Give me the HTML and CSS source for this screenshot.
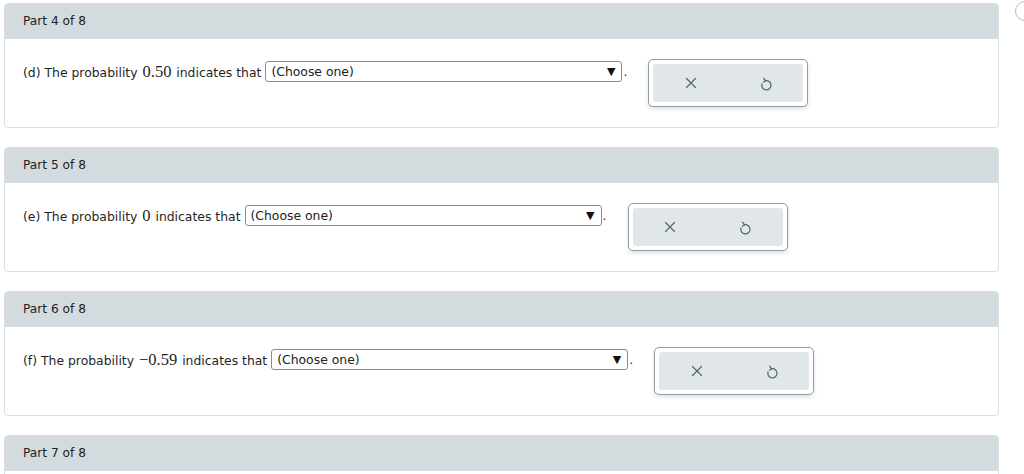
FILE: index.html
```html
<!DOCTYPE html>
<html>
<head>
<meta charset="utf-8">
<link rel="stylesheet" href="styles.css">
</head>
<body>
<div class="page">
  <section class="part">
    <div class="part-head">Part 4 of 8</div>
    <div class="part-body">
      <div class="question">
        <span class="q-text">(d) The probability <span class="math">0.50</span> indicates that</span>
        <div class="dropdown"><span class="dd-label">(Choose one)</span><span class="dd-arrow">▼</span></div><span class="dot">.</span>
      </div>
      <div class="actions">
        <div class="actions-inner">
          <button class="act" aria-label="Clear"><svg width="12" height="12" viewBox="0 0 12 12"><path d="M1.5 1.5 L10.5 10.5 M10.5 1.5 L1.5 10.5" stroke="#4e6978" stroke-width="1.3" fill="none" stroke-linecap="round"/></svg></button>
          <button class="act" aria-label="Undo"><svg width="12" height="15" viewBox="0 0 12 15"><path d="M2 8 A4.6 4.6 0 1 0 5.6 4.8" stroke="#4e6978" stroke-width="1.25" fill="none" stroke-linecap="round"/><path d="M3.6 2.2 L5.6 4.8 L3.4 6.2" stroke="#4e6978" stroke-width="1.25" fill="none" stroke-linecap="round" stroke-linejoin="round"/></svg></button>
        </div>
      </div>
    </div>
  </section>
  <section class="part">
    <div class="part-head">Part 5 of 8</div>
    <div class="part-body">
      <div class="question">
        <span class="q-text">(e) The probability <span class="math">0</span> indicates that</span>
        <div class="dropdown"><span class="dd-label">(Choose one)</span><span class="dd-arrow">▼</span></div><span class="dot">.</span>
      </div>
      <div class="actions">
        <div class="actions-inner">
          <button class="act" aria-label="Clear"><svg width="12" height="12" viewBox="0 0 12 12"><path d="M1.5 1.5 L10.5 10.5 M10.5 1.5 L1.5 10.5" stroke="#4e6978" stroke-width="1.3" fill="none" stroke-linecap="round"/></svg></button>
          <button class="act" aria-label="Undo"><svg width="12" height="15" viewBox="0 0 12 15"><path d="M2 8 A4.6 4.6 0 1 0 5.6 4.8" stroke="#4e6978" stroke-width="1.25" fill="none" stroke-linecap="round"/><path d="M3.6 2.2 L5.6 4.8 L3.4 6.2" stroke="#4e6978" stroke-width="1.25" fill="none" stroke-linecap="round" stroke-linejoin="round"/></svg></button>
        </div>
      </div>
    </div>
  </section>
  <section class="part">
    <div class="part-head">Part 6 of 8</div>
    <div class="part-body">
      <div class="question">
        <span class="q-text">(f) The probability <span class="math">−0.59</span> indicates that</span>
        <div class="dropdown"><span class="dd-label">(Choose one)</span><span class="dd-arrow">▼</span></div><span class="dot">.</span>
      </div>
      <div class="actions">
        <div class="actions-inner">
          <button class="act" aria-label="Clear"><svg width="12" height="12" viewBox="0 0 12 12"><path d="M1.5 1.5 L10.5 10.5 M10.5 1.5 L1.5 10.5" stroke="#4e6978" stroke-width="1.3" fill="none" stroke-linecap="round"/></svg></button>
          <button class="act" aria-label="Undo"><svg width="12" height="15" viewBox="0 0 12 15"><path d="M2 8 A4.6 4.6 0 1 0 5.6 4.8" stroke="#4e6978" stroke-width="1.25" fill="none" stroke-linecap="round"/><path d="M3.6 2.2 L5.6 4.8 L3.4 6.2" stroke="#4e6978" stroke-width="1.25" fill="none" stroke-linecap="round" stroke-linejoin="round"/></svg></button>
        </div>
      </div>
    </div>
  </section>
  <section class="part">
    <div class="part-head">Part 7 of 8</div>
    <div class="part-body"></div>
  </section>
</div>
<div class="edge-circle"></div>
</body>
</html>
```
FILE: styles.css
```css
html, body {
  margin: 0;
  padding: 0;
  background: #ffffff;
  overflow: hidden;
}
body {
  font-family: "DejaVu Sans", Verdana, sans-serif;
  font-size: 12px;
  color: #1f1f1f;
  height: 474px;
}
.page {
  padding: 3px 0 0 4px;
  width: 995px;
  display: flex;
  flex-direction: column;
  gap: 19px;
}
.part {
  border: 1px solid #d7dee2;
  border-radius: 4px;
  overflow: hidden;
  background: #fff;
}
.part-head {
  background: #d4dbdf;
  height: 35px;
  line-height: 35px;
  padding-left: 18px;
  font-size: 12.2px;
  color: #222;
}
.part-body {
  height: 88px;
  box-sizing: border-box;
  padding: 20px 0 0 18px;
  display: flex;
  align-items: flex-start;
}
.question {
  display: flex;
  align-items: center;
  margin-top: 2px;
  height: 21px;
  font-size: 12.4px;
}
.q-text {
  white-space: nowrap;
  margin-right: 4px;
}
.math {
  font-family: "Liberation Serif", "Times New Roman", serif;
  font-size: 16.5px;
  margin: 0 1px;
}
.dropdown {
  width: 357px;
  height: 21px;
  box-sizing: border-box;
  border: 1px solid #8c8c8c;
  border-radius: 3px;
  display: flex;
  align-items: center;
  justify-content: space-between;
  padding: 0 6px 0 5px;
  background: #fff;
}
.dd-label {
  font-size: 12.4px;
  color: #222;
}
.dd-arrow {
  font-size: 11px;
  color: #111;
  font-family: "DejaVu Sans", sans-serif;
}
.dot {
  margin-left: 1px;
  width: 4px;
}
.actions {
  margin-left: 21px;
  width: 160px;
  height: 48px;
  box-sizing: border-box;
  border: 1px solid #8f9ca3;
  border-radius: 5px;
  padding: 4px;
  background: #fff;
  box-shadow: 0 2px 4px rgba(0, 0, 0, 0.12);
}
.actions-inner {
  display: flex;
  height: 100%;
  background: #e1e6e9;
  border-radius: 3px;
}
.act {
  flex: 1;
  border: 0;
  background: transparent;
  padding: 0;
  display: flex;
  align-items: center;
  justify-content: center;
  cursor: pointer;
}
.edge-circle {
  position: absolute;
  left: 1015px;
  top: 1px;
  width: 20px;
  height: 20px;
  box-sizing: border-box;
  border: 1px solid #b5bcc0;
  border-radius: 50%;
}
```
